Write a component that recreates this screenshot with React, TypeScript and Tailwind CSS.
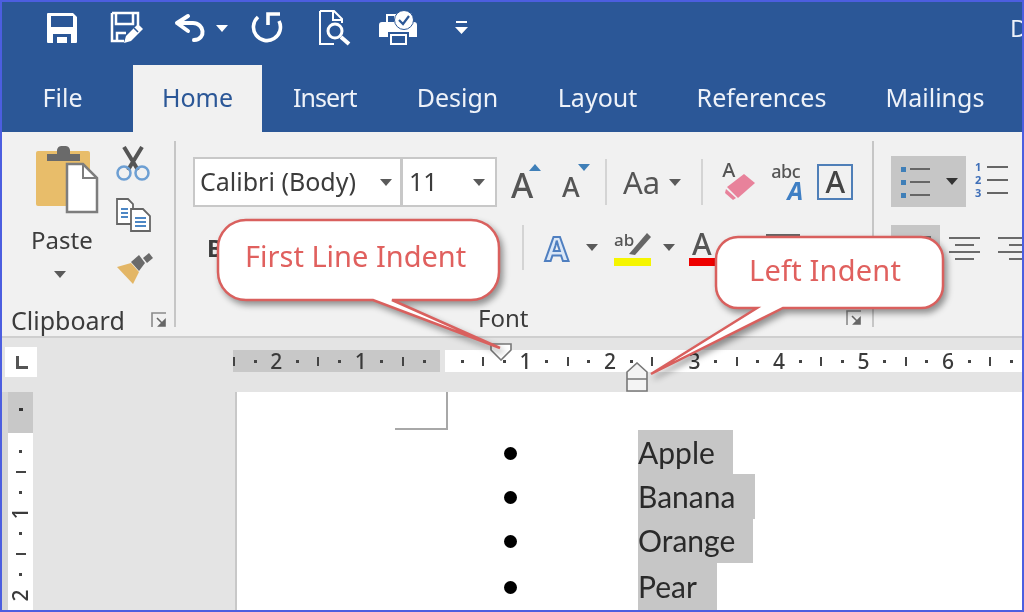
const fruits = [
  { name: "Apple", width: "w-[95px]" },
  { name: "Banana", width: "w-[117px]" },
  { name: "Orange", width: "w-[115px]" },
  { name: "Pear", width: "w-[79px]" },
];

const tabs = [
  { name: "Insert", width: "w-[125.5px] tracking-[-1px]" },
  { name: "Design", width: "w-[140px]" },
  { name: "Layout", width: "w-[140px]" },
  { name: "References", width: "w-[188px]" },
  { name: "Mailings", width: "w-[159px]" },
];

const leftRuler = ["|", ".", "2", ".", "|", ".", "1", ".", "|", "."];
const rightRuler = [
  ".", "|", ".", "1", ".", "|", ".", "2", ".", "|", ".", "3", ".", "|", ".", "4", ".", "|", ".", "5", ".", "|", ".", "6", ".", "|", ".",
];
const sideRuler = [".", "|", ".", "1", ".", "|", ".", "2"];

function Caret({ className = "" }: { className?: string }) {
  return (
    <svg width="12" height="7" viewBox="0 0 12 7" className={className}>
      <path d="M0 0h12L6 7z" fill="#5a5a5a" />
    </svg>
  );
}

function Launcher({ className = "" }: { className?: string }) {
  return (
    <svg width="16" height="16" viewBox="0 0 16 16" className={className} fill="none">
      <path d="M15 1H1v14" stroke="#8a8a8a" strokeWidth="1.6" />
      <path d="M6 6l7 7M14 8v6H8z" stroke="#666" strokeWidth="1.6" fill="#666" />
    </svg>
  );
}

function RulerMark({ mark }: { mark: string }) {
  if (mark === ".") return <span className="h-[3px] w-[3px] bg-[#444]" />;
  if (mark === "|") return <span className="h-[9px] w-[2px] bg-[#444]" />;
  return <span className="text-[21px] font-medium leading-[22px] text-[#3a3a3a]">{mark}</span>;
}

function SaveIcon() {
  return (
    <svg width="32" height="32" viewBox="0 0 32 32" className="ml-[44px]">
      <path
        fillRule="evenodd"
        fill="#fff"
        d="M2 1h25l4 4v25a1 1 0 0 1-1 1H2a1 1 0 0 1-1-1V2a1 1 0 0 1 1-1zM5 4v11h22V4zM7 31V22h18v9h-4v-6H11v6z"
      />
    </svg>
  );
}

function SaveEditIcon() {
  return (
    <svg width="34" height="34" viewBox="0 0 34 34" className="ml-[32px]" fill="none">
      <path d="M2 2h26v12M2 2v28h12" stroke="#fff" strokeWidth="2.5" />
      <path d="M6 3v10h17V3M7 30v-8h9" stroke="#fff" strokeWidth="2.5" />
      <path d="M14 32l2-7L28 13l5 5-12 12z" fill="#fff" />
      <path d="M24 17l4 4" stroke="#2b5797" strokeWidth="1.6" />
    </svg>
  );
}

function UndoIcon() {
  return (
    <svg width="31" height="30" viewBox="0 0 31 30" className="ml-[30px]" fill="none">
      <path d="M14 3L3 10l11 8M3 10h16c11 0 14 16 1 17" stroke="#fff" strokeWidth="4" strokeLinecap="round" strokeLinejoin="round" />
    </svg>
  );
}

function RedoIcon() {
  return (
    <svg width="32" height="32" viewBox="0 0 32 32" className="ml-[23px]" fill="none">
      <path d="M7 5A13.500 13.500 0 1 0 28 9" stroke="#fff" strokeWidth="3.6" />
      <path d="M17 13V2H29" stroke="#fff" strokeWidth="3.6" />
    </svg>
  );
}

function PreviewIcon() {
  return (
    <svg width="33" height="36" viewBox="0 0 33 36" className="ml-[35px]" fill="none">
      <path d="M2 1h14l8 8v4M2 1v33h14" stroke="#fff" strokeWidth="2" />
      <path d="M15 2v8h8" stroke="#fff" strokeWidth="2" />
      <circle cx="17" cy="21" r="7" stroke="#fff" strokeWidth="3" />
      <path d="M23 27l8 7" stroke="#fff" strokeWidth="4" />
    </svg>
  );
}

function PrinterIcon() {
  return (
    <svg width="38" height="36" viewBox="0 0 38 36" className="ml-[28px]">
      <path d="M8 5h8v8H8z" fill="none" stroke="#fff" strokeWidth="2" />
      <path d="M3 12h32a3 3 0 0 1 3 3v12H30v-5H9v5H0V15a3 3 0 0 1 3-3z" fill="#fff" />
      <path d="M11 24h17v11H11z" fill="#fff" />
      <path d="M13 26h13v7H13z" fill="#2b5797" />
      <circle cx="25" cy="10" r="9.5" fill="#fff" stroke="#2b5797" strokeWidth="1" />
      <path d="M20 10l4 4 6-8" fill="none" stroke="#2b5797" strokeWidth="2.2" />
    </svg>
  );
}

function CustomizeIcon() {
  return (
    <svg width="13" height="14" viewBox="0 0 13 14" className="ml-[38px]">
      <path d="M1 0h11v2H1zM0 6h13l-6.5 7z" fill="#fff" />
    </svg>
  );
}

function PasteIcon() {
  return (
    <svg width="64" height="68" viewBox="0 0 64 68" className="ml-[4px]">
      <path d="M3 5h50a2 2 0 0 1 2 2v51a2 2 0 0 1-2 2H3a2 2 0 0 1-2-2V7a2 2 0 0 1 2-2z" fill="#e8bd6a" />
      <path d="M12 15V8h10V4a5 5 0 0 1 5-4h3a5 5 0 0 1 5 4v4h10v7z" fill="#6a6a6a" />
      <path d="M32 18h16l14 14v34H32z" fill="#fff" stroke="#7d7d7d" strokeWidth="2.5" />
      <path d="M48 18v14h14" fill="none" stroke="#7d7d7d" strokeWidth="2" />
    </svg>
  );
}

function ScissorsIcon() {
  return (
    <svg width="34" height="36" viewBox="0 0 34 36" fill="none">
      <path d="M8 1l14 23M26 1L12 24" stroke="#555" strokeWidth="4" />
      <circle cx="8" cy="27" r="6.5" stroke="#6d9fd3" strokeWidth="2.5" />
      <circle cx="26" cy="27" r="6.5" stroke="#6d9fd3" strokeWidth="2.5" />
    </svg>
  );
}

function CopyIcon() {
  return (
    <svg width="36" height="34" viewBox="0 0 36 34" fill="none">
      <path d="M1 1h11l5 5v20H1z" fill="#fff" stroke="#666" strokeWidth="1.8" />
      <path d="M15 11h12l7 7v15H15z" fill="#fff" stroke="#666" strokeWidth="1.8" />
      <path d="M5 11h7M5 15h7M5 19h7M19 20h11M19 24h11M19 28h11" stroke="#4d87c5" strokeWidth="1.8" />
    </svg>
  );
}

function BrushIcon() {
  return (
    <svg width="38" height="34" viewBox="0 0 38 34">
      <path d="M1 16l14-4 8 9-6 12z" fill="#e3b666" />
      <path d="M15 11l8-7 6 8-6 8z" fill="#6a6a6a" />
      <path d="M27 7l6-5 4 5-6 5z" fill="#6a6a6a" />
    </svg>
  );
}

function EraserIcon() {
  return (
    <div className="relative ml-[19px] h-[36px] w-[34px]">
      <span className="absolute left-0 top-[-4px] text-[20px] font-medium leading-none text-[#555]">A</span>
      <svg width="34" height="30" viewBox="0 0 34 30" className="absolute left-0 top-[6px]">
        <path d="M5 17L22 4l11 9-17 15z" fill="#e8829b" />
        <path d="M4 19l10 9-3 2-8-7z" fill="#e8829b" />
      </svg>
    </div>
  );
}

function BulletsIcon() {
  return (
    <svg width="32" height="32" viewBox="0 0 32 32">
      <path d="M2 1h5v5H2zM2 14h5v5H2zM2 27h5v5H2z" fill="#3f7fb8" />
      <path d="M11 3h20M11 16h20M11 29h20" stroke="#666" strokeWidth="2" />
    </svg>
  );
}

function NumberingIcon() {
  return (
    <div className="-mt-[4px] ml-[9px] flex w-[33px] flex-col gap-[2px]">
      {["1", "2", "3"].map((n) => (
        <div key={n} className="flex h-[11px] items-center">
          <span className="w-[12px] text-[11px] font-bold leading-[11px] text-[#3f6fb8]">{n}</span>
          <span className="h-[2px] flex-1 bg-[#666]" />
        </div>
      ))}
    </div>
  );
}

function AlignLines({ kind, className = "" }: { kind: "left" | "center" | "right"; className?: string }) {
  const d = {
    left: "M0 1h31M0 8h20M0 15h31M0 22h20",
    center: "M0 1h31M6 8h19M0 15h31M6 22h19",
    right: "M0 1h31M11 8h20M0 15h31M11 22h20",
  }[kind];
  return (
    <svg width="31" height="24" viewBox="0 0 31 24" className={className}>
      <path d={d} stroke="#6a6a6a" strokeWidth="2" />
    </svg>
  );
}

function Callout({ path, label, labelClass }: { path: string; label: string; labelClass: string }) {
  return (
    <>
      <svg width="1024" height="612" viewBox="0 0 1024 612" className="absolute left-0 top-0 drop-shadow-[3px_4px_3px_rgba(0,0,0,0.4)]">
        <path d={path} fill="#fff" stroke="#d9605e" strokeWidth="2.5" />
      </svg>
      <span className={"absolute text-[29px] leading-none text-[#e0605e] " + labelClass}>{label}</span>
    </>
  );
}

export default function App() {
  return (
    <div className="relative flex h-[612px] w-[1024px] flex-col overflow-hidden border-2 border-[#4c5ee0] bg-white font-['Noto_Sans',sans-serif] blur-[0.7px]">
      <div className="flex h-[63px] shrink-0 items-center bg-[#2b5797] pb-[11px]">
        <SaveIcon />
        <SaveEditIcon />
        <UndoIcon />
        <Caret className="ml-[11px] [&>path]:fill-white" />
        <RedoIcon />
        <PreviewIcon />
        <PrinterIcon />
        <CustomizeIcon />
        <span className="ml-auto -mr-[8px] w-[20px] text-[24px] text-[#eef2f9]">D</span>
      </div>

      <div className="flex h-[67px] shrink-0 bg-[#2b5797] text-[25px] text-[#eef2f9]">
        <span className="mr-[10px] flex w-[121px] items-center justify-center pb-[2px]">File</span>
        <span className="flex w-[129px] items-center justify-center bg-[#f1f1f1] pb-[2px] text-[#2b5797]">Home</span>
        {tabs.map((tab) => (
          <span key={tab.name} className={"flex shrink-0 items-center justify-center pb-[2px] " + tab.width}>
            {tab.name}
          </span>
        ))}
      </div>

      <div className="flex h-[206px] shrink-0 border-b-2 border-[#cfcfcf] bg-[#f1f1f1] text-[#3c3c3c]">
        <section className="flex w-[172px] shrink-0 flex-col pt-[14px]">
          <div className="flex h-[160px]">
            <div className="ml-[29px] flex w-[68px] flex-col items-start">
              <PasteIcon />
              <span className="mt-[11px] text-[24px] leading-[30px]">Paste</span>
              <Caret className="ml-[23px] mt-[16px]" />
            </div>
            <div className="ml-[17px] flex flex-col items-start">
              <ScissorsIcon />
              <div className="mt-[16px]"><CopyIcon /></div>
              <div className="mt-[19px]"><BrushIcon /></div>
            </div>
          </div>
          <div className="flex items-center pl-[9px] pr-[7px]">
            <span className="text-[25px] leading-[28px]">Clipboard</span>
            <Launcher className="ml-auto" />
          </div>
        </section>
        <div className="my-[9px] w-[2px] shrink-0 bg-[#c6c6c6]" />

        <section className="flex w-[696px] shrink-0 flex-col pt-[25px]">
          <div className="flex h-[50px] items-center">
            <div className="ml-[17px] flex h-[50px] w-[209px] items-center border-2 border-[#c8c8c8] bg-white pl-[5px] pr-[8px] text-[25px]">
              Calibri (Body)
              <Caret className="ml-auto" />
            </div>
            <div className="-ml-[1px] flex h-[50px] w-[96px] items-center border-2 border-[#c8c8c8] bg-white pl-[6px] pr-[10px] text-[25px]">
              11
              <Caret className="ml-auto" />
            </div>
            <div className="relative ml-[14px] h-[44px] w-[30px] text-[34px] font-medium leading-[50px] text-[#555]">
              A
              <svg width="12" height="7" viewBox="0 0 12 7" className="absolute right-0 top-[4px]"><path d="M0 7h12L6 0z" fill="#3f7fb8" /></svg>
            </div>
            <div className="relative ml-[21px] h-[44px] w-[28px] text-[27px] font-medium leading-[54px] text-[#555]">
              A
              <svg width="12" height="7" viewBox="0 0 12 7" className="absolute right-0 top-[4px]"><path d="M0 0h12L6 7z" fill="#3f7fb8" /></svg>
            </div>
            <div className="ml-[15px] h-[46px] w-[2px] bg-[#d4d4d4]" />
            <span className="ml-[16px] text-[31px] leading-none text-[#555]">Aa</span>
            <Caret className="ml-[9px]" />
            <div className="ml-[20px] h-[46px] w-[2px] bg-[#d4d4d4]" />
            <EraserIcon />
            <div className="ml-[15px] flex w-[32px] flex-col items-end">
              <span className="self-start text-[18px] font-medium leading-[17px] tracking-[-0.5px] text-[#555]">abc</span>
              <span className="text-[25px] font-bold italic leading-[21px] text-[#3f7fc4]">A</span>
            </div>
            <span className="ml-[14px] flex h-[36px] w-[36px] items-center justify-center border-2 border-[#4f7fb8] text-[30px] font-medium leading-none text-[#444]">A</span>
          </div>

          <div className="mt-[18px] flex h-[45px] items-center">
            <span className="ml-[31px] text-[24px] font-bold leading-none">B</span>
            <div className="ml-[299px] h-[45px] w-[2px] bg-[#d4d4d4]" />
            <span className="ml-[21px] w-[32px] text-[34px] font-bold leading-none text-[#dbe7f6] [-webkit-text-stroke:2px_#4f7fc0]">A</span>
            <Caret className="ml-[9px]" />
            <div className="relative ml-[16px] h-[42px] w-[37px]">
              <span className="absolute left-0 top-[4px] text-[17px] font-medium leading-none text-[#555]">ab</span>
              <svg width="22" height="26" viewBox="0 0 22 26" className="absolute right-0 top-[3px]"><path d="M0 24L18 3l4 4L6 25z" fill="#666" /></svg>
              <span className="absolute bottom-[3px] left-0 h-[8px] w-[37px] bg-[#f5f500]" />
            </div>
            <Caret className="ml-[12px]" />
            <div className="relative ml-[14px] h-[42px] w-[29px]">
              <span className="absolute left-[3px] top-[2px] text-[30px] font-medium leading-none text-[#555]">A</span>
              <span className="absolute bottom-[3px] left-0 h-[8px] w-[29px] bg-[#ee0000]" />
            </div>
            <span className="ml-[48px] h-[36px] w-[34px] self-end border-t-2 border-[#666]" />
            <span className="ml-[21px] h-[24px] w-[24px] self-center rounded-full border-2 border-[#666]" />
          </div>

          <div className="mt-auto flex items-center pb-[4px]">
            <span className="ml-[302px] text-[24px] leading-[28px]">Font</span>
            <Launcher className="ml-auto mr-[10px]" />
          </div>
        </section>
        <div className="my-[9px] w-[2px] shrink-0 bg-[#c6c6c6]" />

        <section className="flex flex-1 flex-col pl-[17px] pt-[24px]">
          <div className="flex items-center">
            <div className="flex h-[51px] w-[75px] shrink-0 items-center bg-[#c6c6c6] pl-[8px]">
              <BulletsIcon />
              <Caret className="ml-[15px] [&>path]:fill-[#333]" />
            </div>
            <NumberingIcon />
          </div>
          <div className="mt-[18px] flex items-start">
            <div className="flex h-[45px] w-[49px] shrink-0 items-center bg-[#c6c6c6] pl-[9px]">
              <AlignLines kind="left" />
            </div>
            <AlignLines kind="center" className="ml-[9px] mt-[12px] shrink-0" />
            <AlignLines kind="right" className="ml-[18px] mt-[12px] shrink-0" />
          </div>
        </section>
      </div>

      <div className="flex h-[54px] shrink-0 bg-[#e4e4e4]">
        <div className="ml-[3px] mt-[9px] flex h-[30px] w-[33px] items-center justify-center bg-white">
          <svg width="13" height="13" viewBox="0 0 13 13"><path d="M1 0h3v10h9v3H1z" fill="#555" /></svg>
        </div>
        <div className="ml-[196px] mt-[12px] flex h-[22px] w-[210px] items-center bg-[#c8c8c8]">
          <div className="-ml-[10px] flex">
            {leftRuler.map((mark, i) => (
              <span key={i} className="flex h-[22px] w-[21.13px] shrink-0 items-center justify-center"><RulerMark mark={mark} /></span>
            ))}
          </div>
        </div>
        <div className="ml-[5px] mt-[12px] flex h-[22px] flex-1 items-center bg-white pl-[7px]">
          {rightRuler.map((mark, i) => (
            <span key={i} className="flex h-[22px] w-[21.13px] shrink-0 items-center justify-center"><RulerMark mark={mark} /></span>
          ))}
        </div>
      </div>

      <div className="flex min-h-0 flex-1">
        <div className="w-[6px] bg-[#d6d6d6]" />
        <div className="w-[25px] overflow-hidden bg-white">
          <div className="flex h-[41px] items-center justify-center bg-[#c8c8c8] pb-[7px]">
            <span className="h-[3px] w-[4px] bg-[#333]" />
          </div>
          <div className="flex flex-col pt-[8px]">
            {sideRuler.map((mark, i) => (
              <span key={i} className="flex h-[20.6px] items-center justify-center">
                {mark === "." && <span className="h-[3px] w-[3px] bg-[#444]" />}
                {mark === "|" && <span className="h-[2px] w-[10px] bg-[#444]" />}
                {mark !== "." && mark !== "|" && <span className="-rotate-90 text-[21px] font-medium leading-none text-[#3a3a3a]">{mark}</span>}
              </span>
            ))}
          </div>
        </div>
        <div className="w-[202px] bg-[#e4e4e4]" />
        <div className="flex-1 border-l-2 border-[#c8c8c8] bg-white font-['Lato',sans-serif] text-[30px] text-[#2a2a2a]">
          <div className="ml-[158px] h-[38px] w-[53px] border-b-2 border-r-2 border-[#a8a8a8]" />
          {fruits.map((fruit) => (
            <div key={fruit.name} className="flex h-[44.3px] items-center pl-[267px] last:h-[48px]">
              <span className="mt-[2px] h-[13px] w-[13px] rounded-full bg-black" />
              <span className={"ml-[121px] flex h-full items-center bg-[#c6c6c6] " + fruit.width}>{fruit.name}</span>
            </div>
          ))}
        </div>
      </div>

      <div className="absolute -inset-[2px]">
        <svg width="22" height="18" viewBox="0 0 22 18" className="absolute left-[490px] top-[343px]">
          <path d="M1 1h20v6l-10 10L1 7z" fill="#fff" stroke="#777" strokeWidth="1.6" />
        </svg>
        <svg width="22" height="30" viewBox="0 0 22 30" className="absolute left-[626px] top-[362px]">
          <path d="M1 10L11 1l10 9v19H1zM1 17h20" fill="#f4f4f4" stroke="#777" strokeWidth="1.6" />
        </svg>
        <Callout
          path="M246 220H471A28 28 0 0 1 499 248V272A28 28 0 0 1 471 300H392L500 348L373 300H246A28 28 0 0 1 218 272V248A28 28 0 0 1 246 220Z"
          label="First Line Indent"
          labelClass="left-[245px] top-[241px]"
        />
        <Callout
          path="M738 237H921A22 22 0 0 1 943 259V286A22 22 0 0 1 921 308H783L651 374L757 308H738A22 22 0 0 1 716 286V259A22 22 0 0 1 738 237Z"
          label="Left Indent"
          labelClass="left-[749px] top-[255px] tracking-[0.2px]"
        />
      </div>
    </div>
  );
}
